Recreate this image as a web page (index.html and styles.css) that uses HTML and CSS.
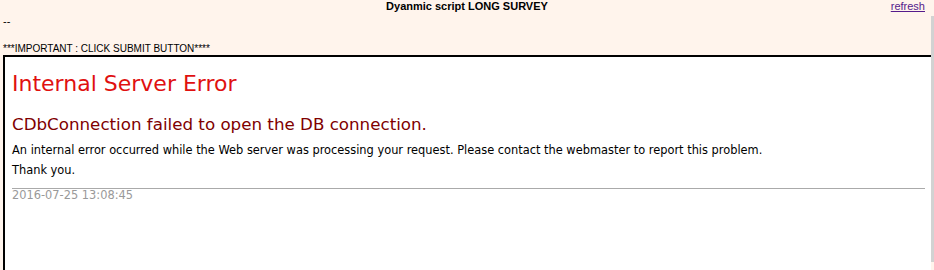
FILE: index.html
```html
<!DOCTYPE html>
<html lang="en">

<head>
    <meta charset="UTF-8">
    <meta name="viewport" content="width=device-width, initial-scale=1.0">
    <title>Dyanmic script LONG SURVEY</title>
    <link rel="stylesheet" href="styles.css">
</head>

<body>
    <div class="topbar">
        <span class="title">Dyanmic script LONG SURVEY</span>
        <a href="#" class="refresh">refresh</a>
    </div>

    <div class="page">
        <div class="dash">--</div>
        <div class="notice">***IMPORTANT : CLICK SUBMIT BUTTON****</div>

        <div class="frame">
            <h1>Internal Server Error</h1>
            <h2>CDbConnection failed to open the DB connection.</h2>
            <p>An internal error occurred while the Web server was processing your request. Please contact the webmaster to report this problem.</p>
            <p>Thank you.</p>
            <div class="version">2016-07-25 13:08:45</div>
        </div>
    </div>
</body>

</html>
```

FILE: styles.css
```css
body {
    margin: 0;
    background: #fff4ec;
    font-family: "Liberation Sans", Arial, sans-serif;
    font-size: 11px;
    color: #000;
    height: 270px;
    overflow: hidden;
}

/* 顶部标题栏 */
.topbar {
    height: 24px;
    position: relative;
    text-align: center;
}

.topbar .title {
    font-weight: bold;
    font-size: 11px;
}

.topbar .refresh {
    position: absolute;
    top: 0;
    right: 9px;
    color: #551a8b;
    font-size: 11px;
}

.page {
    border-right: 3px solid #d2d2d2;
    height: 246px;
}

.dash {
    padding-left: 3px;
    line-height: 10px;
    margin-top: -8px;
    height: 27px;
}

.notice {
    padding-left: 3px;
    line-height: 12px;
    font-size: 10px;
}

/* 错误页面的框 */
.frame {
    margin-left: 3px;
    border-left: 2px solid #000;
    border-top: 2px solid #000;
    background: #fff;
    height: 230px;
    padding: 0 6px 0 7px;
    font-family: "DejaVu Sans", Verdana, sans-serif;
}

.frame h1 {
    font-weight: normal;
    font-size: 22px;
    color: #e01010;
    margin: 0;
    padding-top: 14px;
    line-height: 26px;
}

.frame h2 {
    font-weight: normal;
    font-size: 16.7px;
    color: #800000;
    margin: 0;
    padding-top: 16px;
    line-height: 22px;
}

.frame p {
    font-size: 11.4px;
    margin: 0;
    line-height: 20px;
}

.frame h2 + p {
    margin-top: 5px;
}

.version {
    color: #999;
    font-size: 11.4px;
    line-height: 13px;
    border-top: 1px solid #aaa;
    margin-top: 8px;
}
```
